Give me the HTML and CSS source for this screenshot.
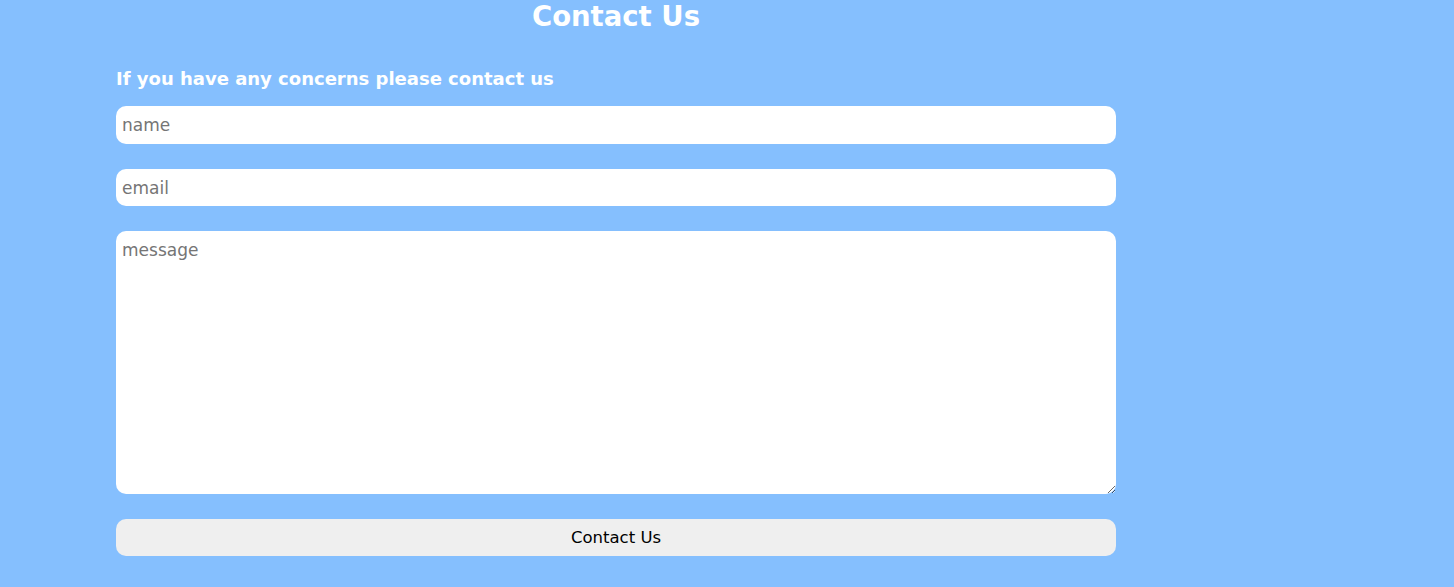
FILE: index.html
```html
<!DOCTYPE html>
<html>
<head>
<meta charset="utf-8">
<link rel="stylesheet" href="styles.css">
</head>
<body>
<div class="page">
  <section class="contact">
    <h1 class="title">Contact Us</h1>
    <h3 class="subtitle">If you have any concerns please contact us</h3>
    <form class="form">
      <input class="field" type="text" placeholder="name">
      <input class="field short" type="email" placeholder="email">
      <textarea class="field area" placeholder="message"></textarea>
      <button class="submit" type="button">Contact Us</button>
    </form>
  </section>
</div>
</body>
</html>
```
FILE: styles.css
```css
html, body {
  margin: 0;
  padding: 0;
  height: 100%;
}
body {
  background: #85bffe;
  font-family: "DejaVu Sans", sans-serif;
  overflow: hidden;
}
.page {
  padding-left: 116px;
}
.contact {
  width: 1000px;
}
.title {
  margin: 0;
  text-align: center;
  color: #fff;
  font-size: 27.5px;
  font-weight: 700;
  line-height: 32px;
}
.subtitle {
  margin: 34px 0 14px 0;
  color: #fff;
  font-size: 18px;
  font-weight: 700;
  line-height: 26px;
}
.form {
  display: flex;
  flex-direction: column;
  gap: 25px;
}
.field {
  box-sizing: border-box;
  width: 100%;
  height: 38px;
  border: none;
  border-radius: 10px;
  background: #fff;
  padding: 0 6px;
  font-family: "DejaVu Sans", sans-serif;
  font-size: 17px;
  color: #333;
  outline: none;
}
.short {
  height: 37px;
}
.field::placeholder {
  color: #757575;
}
.area {
  height: 263px;
  padding: 9px 6px;
  resize: vertical;
  display: block;
}
.submit {
  height: 37px;
  border: none;
  border-radius: 10px;
  background: #efefef;
  color: #000;
  font-family: "DejaVu Sans", sans-serif;
  font-size: 16.5px;
}
```
